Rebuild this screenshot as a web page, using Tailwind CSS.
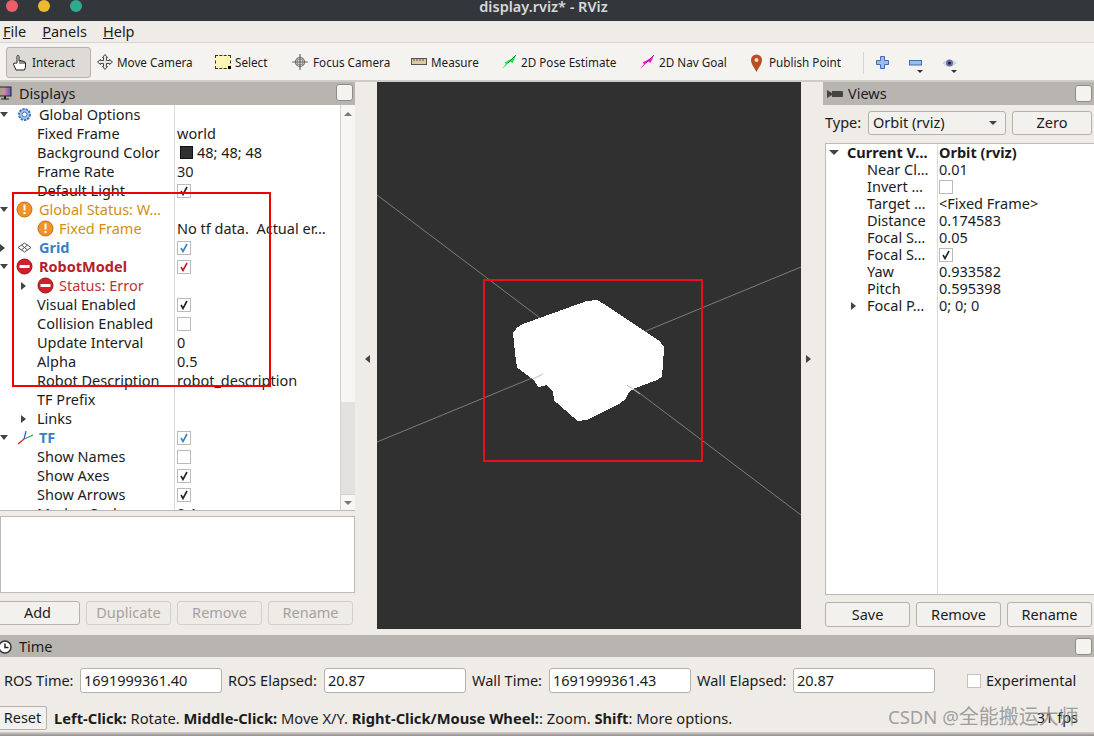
<!DOCTYPE html>
<html lang="en">
<head>
  <meta charset="UTF-8">
  <title>display.rviz* - RViz</title>
  <script src="https://cdn.jsdelivr.net/npm/@tailwindcss/browser@4"></script>
</head>
<body class="bg-[#efebe7] overflow-hidden">
<div class="relative w-[1094px] h-[736px] overflow-hidden flex flex-col bg-[#efebe7] text-[#1c1c1c] font-['Noto_Sans','Open_Sans',sans-serif] text-[14.5px]">

  <!-- title bar -->
  <div class="relative h-[21px] shrink-0 bg-[#33363b] flex items-center justify-center pr-[7px]">
    <div class="absolute left-0 top-0 flex gap-[20px] pl-[6px]">
      <span class="w-[12px] h-[12px] rounded-full bg-[#ec5f6a]"></span>
      <span class="w-[12px] h-[12px] rounded-full bg-[#efb92f]"></span>
      <span class="w-[12px] h-[12px] rounded-full bg-[#2eaa8c]"></span>
    </div>
    <span class="text-[#d8d8d8] font-semibold text-[14.5px] leading-[16px] -mt-[9px]">display.rviz* - RViz</span>
  </div>

  <!-- menu bar -->
  <div class="h-[22px] shrink-0 flex items-center gap-[16px] pl-[3px] border-b border-[#d8d4cf] text-[14.5px]">
    <span><span class="underline">F</span>ile</span>
    <span><span class="underline">P</span>anels</span>
    <span><span class="underline">H</span>elp</span>
  </div>

  <!-- toolbar -->
  <div class="h-[39px] shrink-0 flex items-center bg-[#f5f3f0] border-b-2 border-[#cfcbc6] pl-[6px] pt-[2px] text-[11.7px]">
    <div class="w-[85px] h-[31px] flex items-center gap-[4px] pl-[5px] border border-[#b5b1ac] rounded-[3px] bg-[#dedad6]">
      <svg width="16" height="18" viewBox="0 0 16 18" fill="#fff" stroke="#222" stroke-width="1"><path d="M5 9V2.500a1 1 0 0 1 2 0V7l1-.5 1.500.3 1.500.3 1.700.6.8 1.300v4l-1 3H4L1.500 10.500l.5-1.500 1.500.200z"/><path d="M8 7v3M10 7v3M12 8v2" fill="none"/></svg>
      <span>Interact</span>
    </div>
    <div class="w-[124px] flex items-center gap-[4px] pl-[6px]">
      <svg width="16" height="16" viewBox="0 0 16 16" fill="#e8e6e3" stroke="#444" stroke-width="1"><path d="M8 .500l2.500 3H9.500v3h3V5.500l3 2.500-3 2.500V9.500h-3v3h1L8 15.500l-2.500-3h1v-3h-3v1L.500 8l3-2.500v1h3v-3h-1z"/></svg>
      <span>Move Camera</span>
    </div>
    <div class="w-[77px] flex items-center gap-[4px]">
      <span class="relative w-[16px] h-[14px] bg-[#fdf6b5] border border-dashed border-[#333]"><span class="absolute right-[-1px] bottom-[-1px] w-[3px] h-[3px] bg-black"></span></span>
      <span>Select</span>
    </div>
    <div class="w-[119px] flex items-center gap-[5px]">
      <svg width="16" height="16" viewBox="0 0 16 16" fill="none" stroke="#666" stroke-width="1.200"><circle cx="8" cy="8" r="4.500" fill="#ddd"/><path d="M8 0v16M0 8h16"/><path d="M5.500 5.500h5v5h-5z" stroke-width=".6"/></svg>
      <span>Focus Camera</span>
    </div>
    <div class="w-[90px] flex items-center gap-[4px]">
      <svg width="16" height="8" viewBox="0 0 16 8"><rect x=".5" y=".5" width="15" height="6" fill="#dccd95" stroke="#555"/><path d="M3 1v2M6 1v2M9 1v2M12 1v2" stroke="#555"/></svg>
      <span>Measure</span>
    </div>
    <div class="w-[138px] flex items-center gap-[5px]">
      <svg width="15" height="14" viewBox="0 0 15 14"><path d="M1 14l4-5-1.500-1.500L11 3.500 15 0l-2 5-1.500 3L9 6.500 4 11.500z" fill="#14e84a"/><path d="M7 8L15 0" stroke="#0a7a30" stroke-width=".8"/></svg>
      <span>2D Pose Estimate</span>
    </div>
    <div class="w-[111px] flex items-center gap-[5px]">
      <svg width="15" height="14" viewBox="0 0 15 14"><path d="M1 14l4-5-1.500-1.500L11 3.500 15 0l-2 5-1.500 3L9 6.500 4 11.500z" fill="#f31ad8"/><path d="M7 8L15 0" stroke="#8a0a7a" stroke-width=".8"/></svg>
      <span>2D Nav Goal</span>
    </div>
    <div class="w-[113px] flex items-center gap-[6px]">
      <svg width="13" height="18" viewBox="0 0 13 18"><path d="M6.500 18C4 13 1 10 1 6a5.500 5.500 0 0 1 11 0c0 4-3 7-5.500 12z" fill="#bb4d22"/><circle cx="6.500" cy="6" r="2" fill="#f2d9c8"/></svg>
      <span>Publish Point</span>
    </div>
    <div class="w-px h-[22px] bg-[#d8d4cf]"></div>
    <div class="flex items-center gap-[19px] pl-[12px]">
      <svg width="13" height="13" viewBox="0 0 13 13"><path d="M4.500.5h4v4h4v4h-4v4h-4v-4h-4v-4h4z" fill="#9dbce6" stroke="#3f6fb0"/></svg>
      <div class="relative w-[14px] h-[14px] flex items-center ml-[1px]">
        <svg width="13" height="6" viewBox="0 0 13 6"><rect x=".5" y=".5" width="12" height="4.500" fill="#9dbce6" stroke="#3f6fb0"/></svg>
        <span class="absolute left-[8px] top-[14px] w-0 h-0 border-x-[3px] border-x-transparent border-t-[3px] border-t-[#333]"></span>
      </div>
      <div class="relative w-[16px] h-[14px] flex items-center">
        <svg width="15" height="10" viewBox="0 0 15 10"><path d="M0 5q7.500-7 15 0q-7.500 7-15 0z" fill="#d4d4d4"/><circle cx="7.500" cy="5" r="3.500" fill="#6573ad"/><circle cx="7.500" cy="5" r="1.500" fill="#1d2238"/></svg>
        <span class="absolute left-[9px] top-[14px] w-0 h-0 border-x-[3px] border-x-transparent border-t-[3px] border-t-[#333]"></span>
      </div>
    </div>
  </div>

  <!-- main area -->
  <div class="h-[553px] shrink-0 flex">

    <!-- displays panel -->
    <div class="w-[355px] shrink-0 flex flex-col">
      <div class="h-[23px] shrink-0 bg-[#b8b4b0] flex items-center justify-between pr-[2px]">
        <div class="flex items-center gap-[7px]">
          <svg width="12" height="15" viewBox="0 0 12 15"><rect x="-3" y="1" width="14" height="9" fill="url(#scr)" stroke="#222"/><path d="M1 12.500h8v1H1z" fill="#222"/><path d="M4 10h2v3H4z" fill="#222"/><defs><linearGradient id="scr"><stop offset="0" stop-color="#5bbf6a"/><stop offset=".5" stop-color="#d98aa0"/><stop offset="1" stop-color="#5a58c8"/></linearGradient></defs></svg>
          <span>Displays</span>
        </div>
        <span class="w-[17px] h-[17px] bg-[#f5f3f0] border border-[#8f8b87] rounded-[3px] -mt-[2px]"></span>
      </div>
      <div class="h-[406px] shrink-0 bg-white flex overflow-hidden border-b border-[#bdb9b4]">
        <div class="w-[340px] shrink-0 relative overflow-hidden">
          <div class="absolute left-[174px] top-0 bottom-0 w-px bg-[#dcdcdc]"></div>
          <div class="flex items-center h-[19px]"><span class="w-0 h-0 border-x-[4px] border-x-transparent border-t-[5px] border-t-[#444]"></span><svg class="ml-[9px]" width="15" height="15" viewBox="0 0 15 15"><circle cx="7.500" cy="7.500" r="5.500" fill="#a9c6ee" stroke="#3f73c0" stroke-width="2" stroke-dasharray="2.300 1"/><circle cx="7.500" cy="7.500" r="2.500" fill="#fff" stroke="#3f73c0"/></svg><span class="ml-[7px]">Global Options</span></div>
          <div class="flex items-center h-[19px]"><span class="w-[177px] pl-[37px]">Fixed Frame</span><span>world</span></div>
          <div class="flex items-center h-[19px]"><span class="w-[180px] pl-[37px]">Background Color</span><span class="w-[13px] h-[13px] bg-[#303030] border border-[#111] mr-[4px]"></span><span>48; 48; 48</span></div>
          <div class="flex items-center h-[19px]"><span class="w-[177px] pl-[37px]">Frame Rate</span><span>30</span></div>
          <div class="flex items-center h-[19px]"><span class="w-[177px] pl-[37px]">Default Light</span><span class="shrink-0 w-[14px] h-[14px] border border-[#bbb] flex items-center justify-center"><svg width="10" height="10" viewBox="0 0 10 10"><path d="M2 5l2 3.500L8 1" fill="none" stroke="#222" stroke-width="1.600"/></svg></span></div>
          <div class="flex items-center h-[19px] text-[#d08f14]"><span class="w-0 h-0 border-x-[4px] border-x-transparent border-t-[5px] border-t-[#444]"></span><svg class="ml-[8px]" width="17" height="17" viewBox="0 0 17 17"><circle cx="8.500" cy="8.500" r="7.500" fill="#f2922a" stroke="#c96a12"/><path d="M7.500 3.500h2v6h-2zM7.500 11h2v2h-2z" fill="#fff"/></svg><span class="ml-[6px]">Global Status: W…</span></div>
          <div class="flex items-center h-[19px] text-[#d08f14]"><svg class="ml-[37px]" width="17" height="17" viewBox="0 0 17 17"><circle cx="8.500" cy="8.500" r="7.500" fill="#f2922a" stroke="#c96a12"/><path d="M7.500 3.500h2v6h-2zM7.500 11h2v2h-2z" fill="#fff"/></svg><span class="w-[123px] pl-[5px]">Fixed Frame</span><span class="text-[#1c1c1c] whitespace-pre">No tf data.  Actual er…</span></div>
          <div class="flex items-center h-[19px]"><span class="w-0 h-0 border-y-[4px] border-y-transparent border-l-[5px] border-l-[#444]"></span><svg class="ml-[12px]" width="15" height="11" viewBox="0 0 15 11" fill="none" stroke="#555"><path d="M7.500 1L14 5.500 7.500 10 1 5.500z"/><path d="M4.500 3l6 5M10.500 3l-6 5"/></svg><span class="w-[145px] pl-[7px] font-bold text-[#3a80c8]">Grid</span><span class="shrink-0 w-[14px] h-[14px] border border-[#bbb] flex items-center justify-center"><svg width="10" height="10" viewBox="0 0 10 10"><path d="M2 5l2 3.500L8 1" fill="none" stroke="#3a80c8" stroke-width="1.600"/></svg></span></div>
          <div class="flex items-center h-[19px]"><span class="w-0 h-0 border-x-[4px] border-x-transparent border-t-[5px] border-t-[#444]"></span><svg class="ml-[8px]" width="17" height="17" viewBox="0 0 17 17"><circle cx="8.500" cy="8.500" r="7.500" fill="#d2202a" stroke="#a01018"/><rect x="3.500" y="7" width="10" height="3" fill="#fff"/></svg><span class="w-[144px] pl-[6px] font-bold text-[#b5202a]">RobotModel</span><span class="shrink-0 w-[14px] h-[14px] border border-[#bbb] flex items-center justify-center"><svg width="10" height="10" viewBox="0 0 10 10"><path d="M2 5l2 3.500L8 1" fill="none" stroke="#b5202a" stroke-width="1.600"/></svg></span></div>
          <div class="flex items-center h-[19px] text-[#c12f3a]"><span class="ml-[21px] w-0 h-0 border-y-[4px] border-y-transparent border-l-[5px] border-l-[#444]"></span><svg class="ml-[11px]" width="17" height="17" viewBox="0 0 17 17"><circle cx="8.500" cy="8.500" r="7.500" fill="#d2202a" stroke="#a01018"/><rect x="3.500" y="7" width="10" height="3" fill="#fff"/></svg><span class="ml-[5px]">Status: Error</span></div>
          <div class="flex items-center h-[19px]"><span class="w-[177px] pl-[37px]">Visual Enabled</span><span class="shrink-0 w-[14px] h-[14px] border border-[#bbb] flex items-center justify-center"><svg width="10" height="10" viewBox="0 0 10 10"><path d="M2 5l2 3.500L8 1" fill="none" stroke="#222" stroke-width="1.600"/></svg></span></div>
          <div class="flex items-center h-[19px]"><span class="w-[177px] pl-[37px]">Collision Enabled</span><span class="shrink-0 w-[14px] h-[14px] border border-[#bbb]"></span></div>
          <div class="flex items-center h-[19px]"><span class="w-[177px] pl-[37px]">Update Interval</span><span>0</span></div>
          <div class="flex items-center h-[19px]"><span class="w-[177px] pl-[37px]">Alpha</span><span>0.5</span></div>
          <div class="flex items-center h-[19px]"><span class="w-[177px] pl-[37px]">Robot Description</span><span>robot_description</span></div>
          <div class="flex items-center h-[19px]"><span class="w-[177px] pl-[37px]">TF Prefix</span></div>
          <div class="flex items-center h-[19px]"><span class="ml-[21px] w-0 h-0 border-y-[4px] border-y-transparent border-l-[5px] border-l-[#444]"></span><span class="ml-[11px]">Links</span></div>
          <div class="flex items-center h-[19px]"><span class="w-0 h-0 border-x-[4px] border-x-transparent border-t-[5px] border-t-[#444]"></span><svg class="ml-[9px]" width="16" height="15" viewBox="0 0 16 15" fill="none" stroke-width="1.200"><path d="M7 9L16 5" stroke="#2fae3a"/><path d="M7 9L9 1" stroke="#2d55d0"/><path d="M7 9L1 14" stroke="#e02020"/></svg><span class="w-[144px] pl-[6px] font-bold text-[#3a80c8]">TF</span><span class="shrink-0 w-[14px] h-[14px] border border-[#bbb] flex items-center justify-center"><svg width="10" height="10" viewBox="0 0 10 10"><path d="M2 5l2 3.500L8 1" fill="none" stroke="#3a80c8" stroke-width="1.600"/></svg></span></div>
          <div class="flex items-center h-[19px]"><span class="w-[177px] pl-[37px]">Show Names</span><span class="shrink-0 w-[14px] h-[14px] border border-[#bbb]"></span></div>
          <div class="flex items-center h-[19px]"><span class="w-[177px] pl-[37px]">Show Axes</span><span class="shrink-0 w-[14px] h-[14px] border border-[#bbb] flex items-center justify-center"><svg width="10" height="10" viewBox="0 0 10 10"><path d="M2 5l2 3.500L8 1" fill="none" stroke="#222" stroke-width="1.600"/></svg></span></div>
          <div class="flex items-center h-[19px]"><span class="w-[177px] pl-[37px]">Show Arrows</span><span class="shrink-0 w-[14px] h-[14px] border border-[#bbb] flex items-center justify-center"><svg width="10" height="10" viewBox="0 0 10 10"><path d="M2 5l2 3.500L8 1" fill="none" stroke="#222" stroke-width="1.600"/></svg></span></div>
          <div class="flex items-center h-[19px]"><span class="w-[177px] pl-[37px]">Marker Scale</span><span>0.1</span></div>
        </div>
        <!-- scrollbar -->
        <div class="w-[15px] shrink-0 flex flex-col border-l border-[#d5d2ce]">
          <div class="h-[297px] bg-[#f7f6f4] flex justify-center pt-[7px]"><span class="w-0 h-0 border-x-[4px] border-x-transparent border-b-[4px] border-b-[#777]"></span></div>
          <div class="flex-1 bg-[#e3e1de]"></div>
          <div class="h-[16px] bg-[#f7f6f4] flex justify-center pt-[6px] border-t border-[#d5d2ce]"><span class="w-0 h-0 border-x-[4px] border-x-transparent border-t-[4px] border-t-[#777]"></span></div>
        </div>
      </div>
      <div class="h-[5px] shrink-0"></div>
      <div class="h-[77px] shrink-0 bg-white border border-[#bdb9b4]"></div>
      <div class="flex gap-[6px] pt-[8px] -ml-[5px]">
        <button class="w-[85px] h-[24px] bg-[#f3f1ee] border border-[#b5b1ac] rounded-[3px]">Add</button>
        <button class="w-[85px] h-[24px] border border-[#d3cfca] rounded-[3px] text-[#a5a29e]">Duplicate</button>
        <button class="w-[85px] h-[24px] border border-[#d3cfca] rounded-[3px] text-[#a5a29e]">Remove</button>
        <button class="w-[85px] h-[24px] border border-[#d3cfca] rounded-[3px] text-[#a5a29e]">Rename</button>
      </div>
    </div>

    <!-- left splitter -->
    <div class="w-[22px] shrink-0 flex items-center pl-[10px]"><span class="w-0 h-0 border-y-[4px] border-y-transparent border-r-[5px] border-r-[#444]"></span></div>

    <!-- 3D view -->
    <div class="w-[424px] h-[547px] shrink-0 bg-[#303030]">
      <svg width="424" height="547" viewBox="377 82 424 547">
        <path d="M377 195L801 515M377 442L801 267" stroke="#7c7c7c" stroke-width="1" fill="none"/>
        <path d="M514 333L518 328 523 325 587 302 597 301 602 304 659 342 663 347 662 365 661 376 657 379 633 388 628 392 625 398 619 403 587 419 578 420 555 400 554 391 547 384 539 386 534 379 518 367 516 353z" fill="#fff" stroke="#fff" stroke-width="2" stroke-linejoin="round" shape-rendering="crispEdges"/>
        <path d="M533 379L543 374M627 385L640 394" stroke="#bdbdbd" stroke-width="1" fill="none"/>
      </svg>
    </div>

    <!-- right splitter -->
    <div class="w-[22px] shrink-0 flex items-center pl-[5px]"><span class="w-0 h-0 border-y-[4px] border-y-transparent border-l-[5px] border-l-[#444]"></span></div>

    <!-- views panel -->
    <div class="w-[271px] shrink-0 flex flex-col">
      <div class="h-[23px] shrink-0 bg-[#b8b4b0] flex items-center justify-between pl-[4px] pr-[2px]">
        <div class="flex items-center gap-[5px]">
          <svg width="16" height="10" viewBox="0 0 16 10" fill="#444"><path d="M0 1l5 3V2h9a2 2 0 0 1 0 6H5V6l-5 3z"/></svg>
          <span>Views</span>
        </div>
        <span class="w-[17px] h-[17px] bg-[#f5f3f0] border border-[#8f8b87] rounded-[3px]"></span>
      </div>
      <div class="h-[38px] shrink-0 flex items-center pl-[2px] pb-[2px]">
        <span class="w-[43px]">Type:</span>
        <div class="w-[138px] h-[24px] bg-[#f3f1ee] border border-[#b5b1ac] rounded-[3px] flex items-center justify-between pl-[4px] pr-[8px]"><span>Orbit (rviz)</span><span class="w-0 h-0 border-x-[4px] border-x-transparent border-t-[4px] border-t-[#444]"></span></div>
        <button class="ml-[6px] w-[80px] h-[24px] bg-[#f3f1ee] border border-[#b5b1ac] rounded-[3px]">Zero</button>
      </div>
      <div class="relative ml-[2px] h-[452px] shrink-0 bg-white border border-[#bdb9b4] border-r-0 leading-[17px]">
        <div class="absolute left-[111px] top-0 bottom-0 w-px bg-[#dcdcdc]"></div>
        <div class="flex items-center h-[17px] font-bold"><span class="ml-[3px] w-0 h-0 border-x-[5px] border-x-transparent border-t-[5px] border-t-[#444]"></span><span class="w-[100px] pl-[8px] whitespace-nowrap">Current V…</span><span>Orbit (rviz)</span></div>
        <div class="flex items-center h-[17px]"><span class="w-[113px] pl-[41px]">Near Cl…</span><span>0.01</span></div>
        <div class="flex items-center h-[17px]"><span class="w-[113px] pl-[41px]">Invert …</span><span class="shrink-0 w-[14px] h-[14px] border border-[#bbb]"></span></div>
        <div class="flex items-center h-[17px]"><span class="w-[113px] pl-[41px]">Target …</span><span>&lt;Fixed Frame&gt;</span></div>
        <div class="flex items-center h-[17px]"><span class="w-[113px] pl-[41px]">Distance</span><span>0.174583</span></div>
        <div class="flex items-center h-[17px]"><span class="w-[113px] pl-[41px]">Focal S…</span><span>0.05</span></div>
        <div class="flex items-center h-[17px]"><span class="w-[113px] pl-[41px]">Focal S…</span><span class="shrink-0 w-[14px] h-[14px] border border-[#bbb] flex items-center justify-center"><svg width="10" height="10" viewBox="0 0 10 10"><path d="M2 5l2 3.500L8 1" fill="none" stroke="#222" stroke-width="1.600"/></svg></span></div>
        <div class="flex items-center h-[17px]"><span class="w-[113px] pl-[41px]">Yaw</span><span>0.933582</span></div>
        <div class="flex items-center h-[17px]"><span class="w-[113px] pl-[41px]">Pitch</span><span>0.595398</span></div>
        <div class="flex items-center h-[17px]"><span class="ml-[25px] w-0 h-0 border-y-[4px] border-y-transparent border-l-[5px] border-l-[#444]"></span><span class="w-[83px] pl-[11px]">Focal P…</span><span>0; 0; 0</span></div>
      </div>
      <div class="flex gap-[6px] pt-[7px] pl-[2px]">
        <button class="w-[85px] h-[25px] bg-[#f3f1ee] border border-[#b5b1ac] rounded-[3px]">Save</button>
        <button class="w-[85px] h-[25px] bg-[#f3f1ee] border border-[#b5b1ac] rounded-[3px]">Remove</button>
        <button class="w-[85px] h-[25px] bg-[#f3f1ee] border border-[#b5b1ac] rounded-[3px]">Rename</button>
      </div>
    </div>
  </div>

  <!-- time panel -->
  <div class="h-[22px] shrink-0 bg-[#b8b4b0] flex items-center justify-between pr-[2px] pt-[1px]">
    <div class="flex items-center gap-[7px]">
      <svg width="12" height="14" viewBox="0 0 12 14"><circle cx="5" cy="7" r="6" fill="#fff" stroke="#333" stroke-width="1.500"/><path d="M5 3.500V7.500H8.500" fill="none" stroke="#222" stroke-width="1.500"/></svg>
      <span>Time</span>
    </div>
    <span class="w-[17px] h-[17px] bg-[#f5f3f0] border border-[#8f8b87] rounded-[3px] -mt-[1px]"></span>
  </div>
  <div class="h-[47px] shrink-0 flex items-center pl-[4px]">
    <span class="w-[76px]">ROS Time:</span>
    <span class="w-[142px] h-[25px] bg-white border border-[#b5b1ac] rounded-[3px] pl-[3px] leading-[22px]">1691999361.40</span>
    <span class="w-[102px] pl-[6px]">ROS Elapsed:</span>
    <span class="w-[142px] h-[25px] bg-white border border-[#b5b1ac] rounded-[3px] pl-[3px] leading-[22px]">20.87</span>
    <span class="w-[83px] pl-[6px]">Wall Time:</span>
    <span class="w-[142px] h-[25px] bg-white border border-[#b5b1ac] rounded-[3px] pl-[3px] leading-[22px]">1691999361.43</span>
    <span class="w-[102px] pl-[6px]">Wall Elapsed:</span>
    <span class="w-[142px] h-[25px] bg-white border border-[#b5b1ac] rounded-[3px] pl-[3px] leading-[22px]">20.87</span>
    <span class="ml-[32px] w-[14px] h-[14px] bg-white border border-[#c5c2be]"></span>
    <span class="ml-[5px]">Experimental</span>
  </div>

  <!-- status bar -->
  <div class="h-[28px] shrink-0 flex items-center justify-between -ml-[2px] pr-[16px]">
    <div class="flex items-center gap-[7px]">
      <button class="w-[49px] h-[24px] bg-[#f3f1ee] border border-[#b5b1ac] rounded-[2px]">Reset</button>
      <span class="whitespace-pre text-[14.7px]"><b>Left-Click:</b> Rotate. <b>Middle-Click:</b> Move X/Y. <b>Right-Click/Mouse Wheel:</b>: Zoom. <b>Shift</b>: More options.</span>
    </div>
    <span>31 fps</span>
  </div>
  <div class="flex-1 bg-gradient-to-b from-[#d5d2ce] to-[#8f8d8a]"></div>

  <!-- annotations drawn over the screenshot -->
  <div class="absolute left-[12px] top-[192px] w-[259px] h-[195px] border-2 border-[#f00000] pointer-events-none"></div>
  <div class="absolute left-[483px] top-[279px] w-[220px] h-[183px] border-2 border-[#e8101a] pointer-events-none"></div>
  <div class="absolute left-[888px] top-[705px] text-[18.5px] leading-[24px] text-[#8a8a8a]/80 font-['Noto_Sans','Noto_Sans_CJK_SC',sans-serif] whitespace-nowrap">CSDN @<span class="text-[20px]">全能搬运大师</span></div>
</div>
</body>
</html>
